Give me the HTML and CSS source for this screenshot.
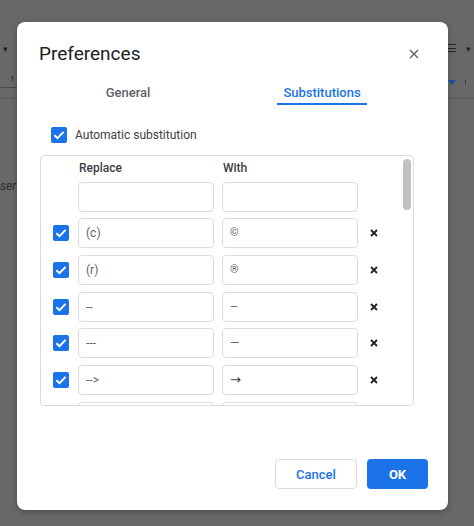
FILE: index.html
```html
<!DOCTYPE html>
<html>
<head>
<meta charset="utf-8">
<link rel="stylesheet" href="styles.css">
</head>
<body>
<div class="page">
  <div class="backdrop">
    <div class="tb-row tb-row1">
      <span class="tb-caret">▾</span>
      <span class="tb-right"><span class="tb-lines">☰</span><span class="tb-caret">▾</span></span>
    </div>
    <div class="tb-row tb-row2">
      <span class="ruler"><span class="ruler-num">1</span></span>
      <span class="tb-right"><span class="blue-tri"></span><span class="tick"></span></span>
    </div>
  </div>
  <div class="doc-text">ser</div>

  <div class="dialog">
    <div class="dlg-head">
      <div class="dlg-title">Preferences</div>
      <svg class="close" width="10" height="10" viewBox="0 0 10 10"><path d="M1 1 L9 9 M9 1 L1 9" stroke="#5f6368" stroke-width="1.4" fill="none"/></svg>
    </div>
    <div class="tabs">
      <div class="tab">General</div>
      <div class="tab active">Substitutions</div>
    </div>
    <div class="auto-row">
      <svg class="cb" width="16" height="16" viewBox="0 0 16 16"><rect width="16" height="16" rx="2" fill="#1a73e8"/><path d="M3.4 8.3 L6.5 11.2 L12.6 4.9" stroke="#fff" stroke-width="2" fill="none"/></svg>
      <span class="auto-label">Automatic substitution</span>
    </div>
    <div class="table-box">
      <div class="grid">
        <div></div><div class="th">Replace</div><div class="th">With</div><div></div>

        <div></div><div class="inp"></div><div class="inp"></div><div></div>

        <svg class="cb" width="16" height="16" viewBox="0 0 16 16"><rect width="16" height="16" rx="2" fill="#1a73e8"/><path d="M3.4 8.3 L6.5 11.2 L12.6 4.9" stroke="#fff" stroke-width="2" fill="none"/></svg>
        <div class="inp">(c)</div><div class="inp sym">©</div>
        <svg class="x" width="8" height="8" viewBox="0 0 8 8"><path d="M1 1 L7 7 M7 1 L1 7" stroke="#202124" stroke-width="1.8" fill="none"/></svg>

        <svg class="cb" width="16" height="16" viewBox="0 0 16 16"><rect width="16" height="16" rx="2" fill="#1a73e8"/><path d="M3.4 8.3 L6.5 11.2 L12.6 4.9" stroke="#fff" stroke-width="2" fill="none"/></svg>
        <div class="inp">(r)</div><div class="inp sym">®</div>
        <svg class="x" width="8" height="8" viewBox="0 0 8 8"><path d="M1 1 L7 7 M7 1 L1 7" stroke="#202124" stroke-width="1.8" fill="none"/></svg>

        <svg class="cb" width="16" height="16" viewBox="0 0 16 16"><rect width="16" height="16" rx="2" fill="#1a73e8"/><path d="M3.4 8.3 L6.5 11.2 L12.6 4.9" stroke="#fff" stroke-width="2" fill="none"/></svg>
        <div class="inp">--</div><div class="inp">–</div>
        <svg class="x" width="8" height="8" viewBox="0 0 8 8"><path d="M1 1 L7 7 M7 1 L1 7" stroke="#202124" stroke-width="1.8" fill="none"/></svg>

        <svg class="cb" width="16" height="16" viewBox="0 0 16 16"><rect width="16" height="16" rx="2" fill="#1a73e8"/><path d="M3.4 8.3 L6.5 11.2 L12.6 4.9" stroke="#fff" stroke-width="2" fill="none"/></svg>
        <div class="inp">---</div><div class="inp">—</div>
        <svg class="x" width="8" height="8" viewBox="0 0 8 8"><path d="M1 1 L7 7 M7 1 L1 7" stroke="#202124" stroke-width="1.8" fill="none"/></svg>

        <svg class="cb" width="16" height="16" viewBox="0 0 16 16"><rect width="16" height="16" rx="2" fill="#1a73e8"/><path d="M3.4 8.3 L6.5 11.2 L12.6 4.9" stroke="#fff" stroke-width="2" fill="none"/></svg>
        <div class="inp">--&gt;</div><div class="inp arrow">→</div>
        <svg class="x" width="8" height="8" viewBox="0 0 8 8"><path d="M1 1 L7 7 M7 1 L1 7" stroke="#202124" stroke-width="1.8" fill="none"/></svg>

        <div></div><div class="inp"></div><div class="inp"></div><div></div>
      </div>
      <div class="scrollbar"></div>
    </div>
    <div class="footer">
      <button class="btn cancel">Cancel</button>
      <button class="btn ok">OK</button>
    </div>
  </div>
</div>
</body>
</html>
```
FILE: styles.css
```css
html, body {
  margin: 0;
  padding: 0;
}
body {
  width: 474px;
  height: 526px;
  overflow: hidden;
  background: #686868;
  font-family: Roboto, "Liberation Sans", Arial, sans-serif;
}
.page {
  position: relative;
  width: 474px;
  height: 526px;
}
.backdrop {
  height: 99px;
  border-bottom: 1px solid #5a5a5a;
  box-sizing: border-box;
}
.tb-row {
  display: flex;
  justify-content: space-between;
  align-items: center;
}
.tb-row1 {
  padding-top: 42px;
  height: 14px;
  padding-left: 3px;
  padding-right: 3px;
}
.tb-caret {
  font-size: 9px;
  color: #202020;
  line-height: 14px;
}
.tb-right {
  display: flex;
  align-items: center;
  gap: 9px;
}
.tb-lines {
  font-size: 11px;
  color: #252525;
  line-height: 14px;
}
.tb-row2 {
  padding-top: 20px;
  height: 12px;
  padding-right: 8px;
}
.ruler {
  width: 18px;
  height: 10px;
  border-bottom: 1px solid #4a4a4a;
  position: relative;
}
.ruler-num {
  position: absolute;
  left: 10px;
  top: -3px;
  font-size: 8px;
  color: #2a2a2a;
}
.blue-tri {
  width: 0;
  height: 0;
  border-left: 4px solid transparent;
  border-right: 4px solid transparent;
  border-top: 5px solid #1f4fa0;
}
.tick {
  width: 1px;
  height: 4px;
  background: #3a3a3a;
}
.doc-text {
  margin-top: 80px;
  margin-left: 0;
  font-style: italic;
  font-size: 12px;
  color: #2e2e2e;
}

.dialog {
  position: absolute;
  left: 17px;
  top: 22px;
  width: 431px;
  height: 488px;
  background: #fff;
  border-radius: 8px;
  box-shadow: 0 2px 6px rgba(0,0,0,0.25);
  box-sizing: border-box;
  padding-top: 20px;
}
.dlg-head {
  display: flex;
  align-items: center;
  justify-content: space-between;
  padding-left: 22px;
  padding-right: 29px;
  height: 24px;
}
.dlg-title {
  font-size: 19px;
  line-height: 24px;
  color: #202124;
}
.close {
  display: block;
}
.tabs {
  display: flex;
  padding-left: 66px;
  gap: 104px;
}
.tab {
  width: 90px;
  text-align: center;
  font-size: 13px;
  line-height: 16px;
  font-weight: 500;
  color: #5f6368;
  padding-top: 19px;
  padding-bottom: 2px;
  border-bottom: 2px solid transparent;
}
.tab.active {
  color: #1a73e8;
  border-bottom-color: #1a73e8;
}
.auto-row {
  display: flex;
  align-items: center;
  gap: 8px;
  margin-top: 22px;
  margin-left: 34px;
  height: 16px;
}
.cb {
  display: block;
}
.auto-label {
  font-size: 12px;
  color: #3c4043;
}
.table-box {
  position: relative;
  margin-top: 12px;
  margin-left: 23px;
  width: 374px;
  height: 251px;
  border: 1px solid #dadce0;
  border-radius: 4px;
  box-sizing: border-box;
  overflow: hidden;
}
.grid {
  display: grid;
  grid-template-columns: 17px 136px 136px 15px;
  column-gap: 8px;
  row-gap: 6.67px;
  padding-left: 12px;
  padding-top: 5px;
  align-items: center;
}
.th {
  font-size: 12px;
  line-height: 14px;
  font-weight: 500;
  color: #3c4043;
  padding-left: 1px;
}
.inp {
  height: 30px;
  border: 1px solid #dadce0;
  border-radius: 4px;
  box-sizing: border-box;
  padding-left: 7px;
  font-size: 12px;
  line-height: 28px;
  color: #5f6368;
}
.inp.sym {
  font-size: 11px;
}
.inp.arrow {
  font-family: "DejaVu Sans", sans-serif;
  font-size: 13px;
  color: #3c4043;
}
.x {
  display: block;
  justify-self: center;
}
.scrollbar {
  position: absolute;
  right: 2px;
  top: 3px;
  width: 8px;
  height: 51px;
  border-radius: 4px;
  background: #c1c1c1;
}
.footer {
  display: flex;
  justify-content: flex-end;
  gap: 10px;
  margin-top: 53px;
  padding-right: 20px;
}
.btn {
  height: 30px;
  border-radius: 4px;
  font-family: Roboto, "Liberation Sans", Arial, sans-serif;
  font-size: 13px;
  font-weight: 500;
  padding: 0;
  box-sizing: border-box;
}
.cancel {
  width: 82px;
  background: #fff;
  border: 1px solid #dadce0;
  color: #1a73e8;
}
.ok {
  width: 61px;
  background: #1a73e8;
  border: none;
  color: #fff;
  font-weight: 700;
}
```
